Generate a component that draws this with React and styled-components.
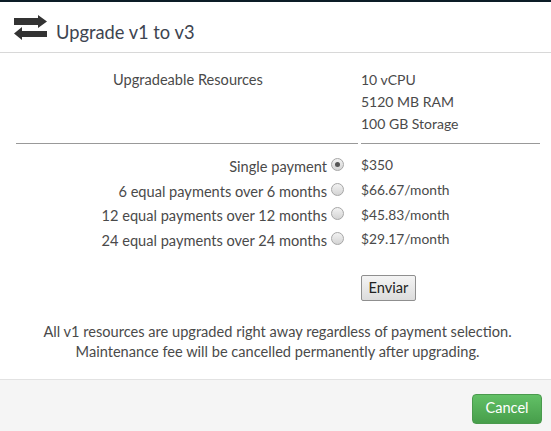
import { createGlobalStyle } from "styled-components";
import styled from "styled-components";

const GlobalStyle = createGlobalStyle`
  html, body {
    margin: 0;
    padding: 0;
    background: #fff;
  }
`;

const Modal = styled.div`
  width: 551px;
  height: 431px;
  display: flex;
  flex-direction: column;
  border-top: 2px solid #0c1c26;
  box-sizing: border-box;
  font-family: "Lato", sans-serif;
  font-size: 14.6px;
  color: #4a4a4a;
  overflow: hidden;
`;

const Header = styled.div`
  height: 50px;
  flex: none;
  display: flex;
  align-items: flex-start;
  padding-left: 14px;
  border-bottom: 1px solid #d8d8d8;
`;

const HeaderIcon = styled.svg`
  width: 34px;
  height: 27px;
  margin-top: 12px;
`;

const Title = styled.h4`
  margin: 19px 0 0 8px;
  font-size: 18.3px;
  font-weight: 400;
  line-height: 22px;
  color: #3d4450;
`;

const Body = styled.div`
  flex: 1;
  padding: 16px 11px 0 16px;
`;

const ResourceRow = styled.div`
  display: grid;
  grid-template-columns: 342px 1fr;
  column-gap: 3px;
  height: 74px;
`;

const ResourceLabel = styled.div`
  padding-left: 97px;
  line-height: 22px;
`;

const ResourceList = styled.div`
  font-size: 14px;
  line-height: 22px;
`;

const Rules = styled.div`
  display: grid;
  grid-template-columns: 342px 1fr;
  column-gap: 3px;
  height: 10px;
`;

const Rule = styled.div`
  height: 1px;
  background: #999;
`;

const PaymentRow = styled.label`
  display: grid;
  grid-template-columns: 342px 1fr;
  column-gap: 3px;
  height: 24.7px;
  align-items: center;
`;

const PaymentName = styled.span`
  display: flex;
  justify-content: flex-end;
  align-items: center;
  gap: 4px;
  padding: 2px 14px 0 0;
`;

const Radio = styled.span`
  width: 11px;
  height: 11px;
  flex: none;
  margin-top: -4px;
  border-radius: 50%;
  border: 1px solid #a6a6a6;
  background: linear-gradient(#f2f2f2, #d4d4d4);
  display: flex;
  align-items: center;
  justify-content: center;

  &::after {
    content: "";
    display: ${(p) => (p.$checked ? "block" : "none")};
    width: 5px;
    height: 5px;
    border-radius: 50%;
    background: #555;
  }
`;

const Price = styled.span`
  font-size: 13.8px;
  line-height: 20px;
`;

const SubmitRow = styled.div`
  margin: 23.2px 0 0 345px;
`;

const Submit = styled.button`
  width: 55px;
  height: 26px;
  padding: 0;
  font-family: inherit;
  font-size: 14.6px;
  color: #222;
  border: 1px solid #8f8f8f;
  border-radius: 2px;
  background: linear-gradient(#f4f4f4, #dcdcdc);
`;

const Note = styled.p`
  margin: 21px 0 0 -14px;
  width: 551px;
  text-align: center;
  line-height: 20px;
`;

const Footer = styled.div`
  height: 52px;
  flex: none;
  display: flex;
  justify-content: flex-end;
  align-items: flex-start;
  padding: 14px 9px 0 0;
  box-sizing: border-box;
  background: #f5f5f5;
  border-top: 1px solid #e2e2e2;
`;

const CancelButton = styled.button`
  width: 70px;
  height: 30px;
  padding: 0 0 3px;
  font-family: inherit;
  font-size: 14.6px;
  color: #fff;
  border: 1px solid #4a9a4d;
  border-radius: 4px;
  background: linear-gradient(#62c066, #479e4b);
`;

const payments = [
  { name: "Single payment", price: "$350", checked: true },
  { name: "6 equal payments over 6 months", price: "$66.67/month" },
  { name: "12 equal payments over 12 months", price: "$45.83/month" },
  { name: "24 equal payments over 24 months", price: "$29.17/month" },
];

export default function App() {
  return (
    <>
      <GlobalStyle />
      <Modal>
        <Header>
          <HeaderIcon viewBox="14 14 34 27">
            <path d="M14 18h24v-3l9 6.500-9 6.500v-3H14z" fill="#333" />
            <path d="M47 31H22v-4l-8 6.500 8 6.500v-3h25z" fill="#333" />
          </HeaderIcon>
          <Title>Upgrade v1 to v3</Title>
        </Header>
        <Body>
          <ResourceRow>
            <ResourceLabel>Upgradeable Resources</ResourceLabel>
            <ResourceList>
              10 vCPU
              <br />
              5120 MB RAM
              <br />
              100 GB Storage
            </ResourceList>
          </ResourceRow>
          <Rules>
            <Rule />
            <Rule />
          </Rules>
          {payments.map((p) => (
            <PaymentRow key={p.name}>
              <PaymentName>
                {p.name}
                <Radio $checked={p.checked} />
              </PaymentName>
              <Price>{p.price}</Price>
            </PaymentRow>
          ))}
          <SubmitRow>
            <Submit>Enviar</Submit>
          </SubmitRow>
          <Note>
            All v1 resources are upgraded right away regardless of payment selection.
            <br />
            Maintenance fee will be cancelled permanently after upgrading.
          </Note>
        </Body>
        <Footer>
          <CancelButton>Cancel</CancelButton>
        </Footer>
      </Modal>
    </>
  );
}
